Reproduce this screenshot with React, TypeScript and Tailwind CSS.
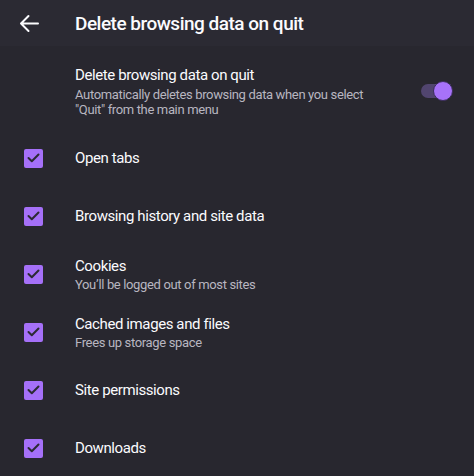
import React from 'react';

type Item = { title: string; subtitle?: string };

const items: Item[] = [
  { title: 'Open tabs' },
  { title: 'Browsing history and site data' },
  { title: 'Cookies', subtitle: 'You’ll be logged out of most sites' },
  { title: 'Cached images and files', subtitle: 'Frees up storage space' },
  { title: 'Site permissions' },
  { title: 'Downloads' },
];

const Checkbox: React.FC = () => (
  <div className="w-[19px] h-[19px] rounded-[2px] bg-[#a570f8] flex items-center justify-center">
    <svg width="13" height="10" viewBox="0 0 13 10" fill="none">
      <path d="M1.5 5 L4.8 8.2 L11.5 1.5" stroke="#2b2a33" strokeWidth="2" strokeLinecap="round" strokeLinejoin="round" />
    </svg>
  </div>
);

export default function App() {
  return (
    <div className="w-[474px] h-[476px] overflow-hidden bg-[#28272f] text-white font-['Roboto',sans-serif]">
      {/* Toolbar */}
      <div className="h-[46px] bg-[#2b2a33] flex items-center">
        <div className="w-[75px] flex items-center pl-[19px]">
          <svg width="20" height="19" viewBox="0 0 20 19" fill="none">
            <path d="M19 9.5 H2 M9.5 2 L2 9.5 L9.5 17" stroke="#fbfbfe" strokeWidth="2" strokeLinecap="round" strokeLinejoin="round" />
          </svg>
        </div>
        <h1 className="text-[19px] font-medium tracking-[-0.5px] text-[#fbfbfe] leading-none">Delete browsing data on quit</h1>
      </div>

      {/* Master toggle */}
      <div className="h-[83px] flex items-center">
        <div className="w-[75px]" />
        <div className="flex-1 pt-[7px]">
          <div className="text-[15px] leading-[20px] tracking-[-0.4px] text-[#fbfbfe]">Delete browsing data on quit</div>
          <div className="text-[13px] leading-[15px] tracking-[-0.35px] text-[#b8b6c0] mt-[2px]">
            Automatically deletes browsing data when you select
            <br />
            "Quit" from the main menu
          </div>
        </div>
        <div className="w-[70px] flex items-center pl-[17px] pt-[6px]">
          <div className="relative w-[28px] h-[14px] rounded-full bg-[#51456f]">
            <div className="absolute left-[12px] top-[-3px] w-[20px] h-[20px] rounded-full bg-[#a772f9] border border-[#3b2d5c]" />
          </div>
        </div>
      </div>

      {/* Options */}
      {items.map((item) => (
        <div key={item.title} className="h-[58px] flex items-center">
          <div className="w-[75px] flex items-center pl-[24px]">
            <Checkbox />
          </div>
          <div className="flex-1">
            <div className="text-[15px] leading-[20px] tracking-[-0.4px] text-[#fbfbfe]">{item.title}</div>
            {item.subtitle && (
              <div className="text-[13px] leading-[16px] tracking-[-0.35px] text-[#b8b6c0] mt-[1px]">{item.subtitle}</div>
            )}
          </div>
        </div>
      ))}
    </div>
  );
}
